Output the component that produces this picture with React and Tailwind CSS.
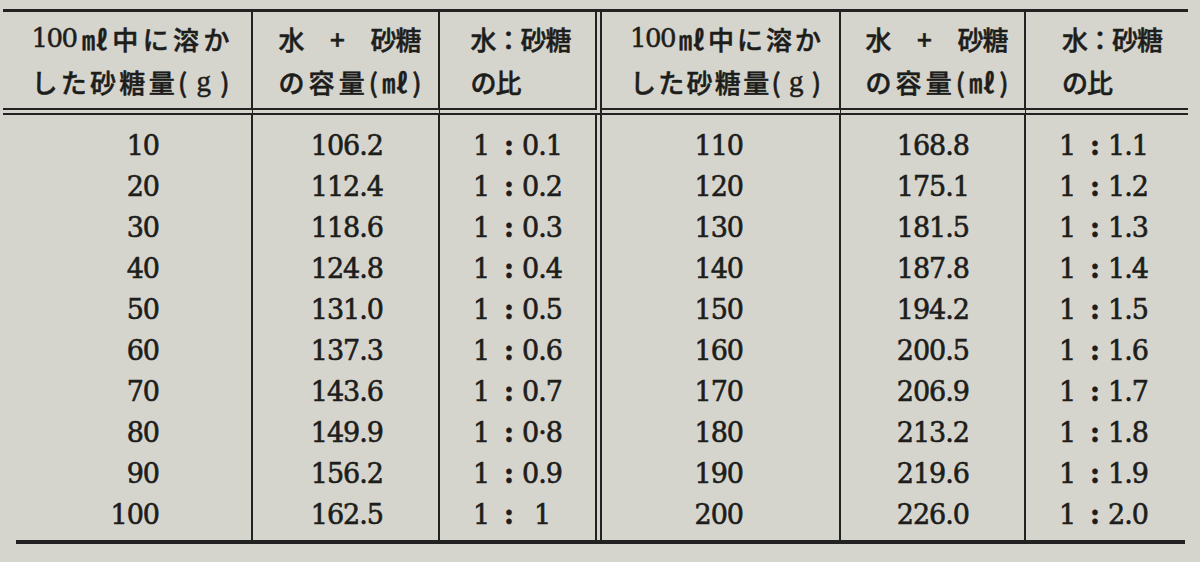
import React from 'react';

const jp = { fontFamily: '"Noto Sans CJK JP", "Noto Sans", sans-serif' };
const num = { fontFamily: '"DejaVu Serif", "Liberation Serif", serif' };
const times = { fontFamily: '"Liberation Serif", serif' };

const left = [
  [10, '106.2', '0.1'],
  [20, '112.4', '0.2'],
  [30, '118.6', '0.3'],
  [40, '124.8', '0.4'],
  [50, '131.0', '0.5'],
  [60, '137.3', '0.6'],
  [70, '143.6', '0.7'],
  [80, '149.9', '0·8'],
  [90, '156.2', '0.9'],
  [100, '162.5', '1'],
];

const right = [
  [110, '168.8', '1.1'],
  [120, '175.1', '1.2'],
  [130, '181.5', '1.3'],
  [140, '187.8', '1.4'],
  [150, '194.2', '1.5'],
  [160, '200.5', '1.6'],
  [170, '206.9', '1.7'],
  [180, '213.2', '1.8'],
  [190, '219.6', '1.9'],
  [200, '226.0', '2.0'],
];

// one header line, spread over a fixed width like justified type
function Line({ parts, className }) {
  return (
    <div className={'flex justify-between ' + className}>
      {parts.map((p, i) => {
        if (p === 'g')
          return (
            <span key={i} style={times} className="px-[6px] text-[29px]">
              g
            </span>
          );
        if (/^[0-9]+$/.test(p))
          return (
            <span key={i} style={num} className="tracking-[-1.5px]">
              {p}
            </span>
          );
        return <span key={i}>{p}</span>;
      })}
    </div>
  );
}

function AmountHead({ className }) {
  return (
    <div>
      <Line parts={['100', '㎖', '中', 'に', '溶', 'か']} className={className} />
      <Line parts={['し', 'た', '砂', '糖', '量', '(', 'g', ')']} className={className} />
    </div>
  );
}

function VolumeHead() {
  return (
    <div>
      <Line parts={['水', '+', '砂糖']} className="w-[142px]" />
      <Line parts={['の', '容', '量', '(', '㎖', ')']} className="w-[142px]" />
    </div>
  );
}

function RatioHead() {
  return (
    <div className="text-left">
      <div>水：砂糖</div>
      <div>の比</div>
    </div>
  );
}

function Ratio({ value }) {
  return (
    <div className="flex">
      <span className="w-[28px]">1</span>
      <span className="w-[15px] text-center font-bold">:</span>
      <span className="ml-[6px] w-[40px] text-center">{value}</span>
    </div>
  );
}

const head =
  'flex items-center justify-center h-[103px] border-b-[7px] border-double border-[#222] leading-[43px] font-medium [-webkit-text-stroke:0.5px_#1d1d1b]';
const body = 'pt-[10px] pb-[5px] h-[425px] leading-[41px] text-[27px] [-webkit-text-stroke:0.6px_#1d1d1b]';

function cells(rows, second) {
  return {
    heads: [
      <div key="h1" className={head + ' border-r-2 ' + (second ? 'pl-[9px]' : 'pl-[6px]')}>
        <AmountHead className={second ? 'w-[190px]' : 'w-[197px]'} />
      </div>,
      <div key="h2" className={head + ' border-r-2 pl-[8px]'}>
        <VolumeHead />
      </div>,
      <div key="h3" className={head + (second ? ' pl-[10px]' : ' border-r-[7px] pl-[6px]')}>
        <RatioHead />
      </div>,
    ],
    bodies: [
      <div
        key="b1"
        className={body + ' border-r-2 border-[#222] text-right ' + (second ? 'pr-[96px]' : 'pr-[92px]')}
        style={num}
      >
        {rows.map(r => (
          <div key={r[0]}>{r[0]}</div>
        ))}
      </div>,
      <div key="b2" className={body + ' border-r-2 border-[#222] text-right pr-[55px]'} style={num}>
        {rows.map(r => (
          <div key={r[0]}>{r[1]}</div>
        ))}
      </div>,
      <div
        key="b3"
        className={body + ' pl-[33px] border-[#222] ' + (second ? '' : 'border-r-[7px] border-double')}
        style={num}
      >
        {rows.map(r => (
          <Ratio key={r[0]} value={r[2]} />
        ))}
      </div>,
    ],
  };
}

export default function App() {
  const l = cells(left, false);
  const r = cells(right, true);

  return (
    <div className="w-[1200px] h-[562px] overflow-hidden bg-[#d5d5ce] text-[#1d1d1b] pt-[9px] pl-[3px]">
      <div className="w-[1185px] border-t-[3px] border-[#222]">
        {/* grid flows row by row: all six header cells, then the six body columns */}
        <div
          className="grid grid-cols-[250px_187px_162px_239px_185px_162px] text-[26px] tracking-[-1px] [&>div]:border-[#222]"
          style={jp}
        >
          <React.Fragment key="lh">{l.heads}</React.Fragment>
          <React.Fragment key="rh">{r.heads}</React.Fragment>
          <React.Fragment key="lb">{l.bodies}</React.Fragment>
          <React.Fragment key="rb">{r.bodies}</React.Fragment>
        </div>
      </div>
      <div className="ml-[13px] w-[1169px] h-[4px] bg-[#222]" />
    </div>
  );
}
